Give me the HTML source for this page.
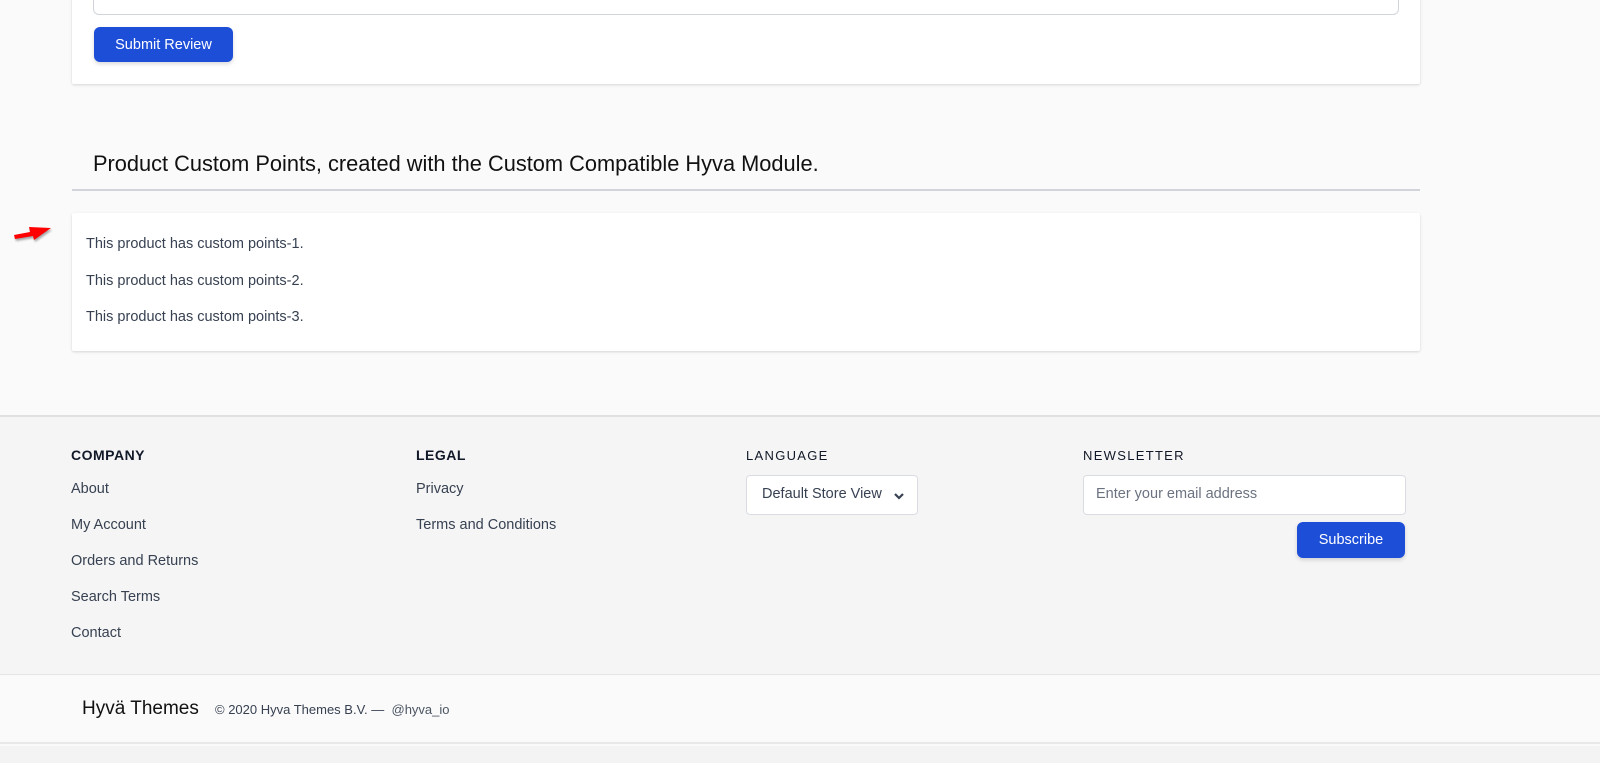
<!DOCTYPE html>
<html><head><meta charset="utf-8"><style>
*{box-sizing:border-box;margin:0;padding:0}
body{width:1600px;height:763px;overflow:hidden;background:#fafafa;font-family:"Liberation Sans",sans-serif;position:relative;color:#111827}
.a{position:absolute}
.card{background:#fff;box-shadow:0 1px 3px rgba(0,0,0,.1),0 1px 2px rgba(0,0,0,.06);border-radius:2px}
.btn{background:#1d4ed8;color:#fff;border-radius:6px;font-size:14.5px;display:flex;align-items:center;justify-content:center;box-shadow:0 2px 4px rgba(0,0,0,.15)}
.pt{font-size:14.5px;color:#374151;left:86px}
.fh{font-size:14px;top:447px;color:#111827}
.fl{font-size:14.5px;color:#374151;left:71px}
</style></head><body>
<div class="a card" style="left:72px;top:-10px;width:1348px;height:94px"></div>
<div class="a" style="left:93px;top:-10px;width:1306px;height:25px;border:1px solid #d1d5db;border-radius:6px;background:#fff"></div>
<div class="a btn" style="left:94px;top:27px;width:139px;height:35px">Submit Review</div>
<div class="a" style="left:93px;top:151px;font-size:21.8px;color:#111">Product Custom Points, created with the Custom Compatible Hyva Module.</div>
<div class="a" style="left:72px;top:189px;width:1348px;height:2px;background:#d1d5db"></div>
<svg class="a" style="left:10px;top:220px;filter:drop-shadow(1px 2px 1px rgba(0,0,0,.35))" width="44" height="24" viewBox="0 0 44 24"><path d="M4 15 L20 12 L19 7 L41 8 L24 20 L23 16 L5 19 Z" fill="#f00"/></svg>
<div class="a card" style="left:72px;top:213px;width:1348px;height:138px"></div>
<div class="a pt" style="top:236px">This product has custom points-1.</div>
<div class="a pt" style="top:273px">This product has custom points-2.</div>
<div class="a pt" style="top:309px">This product has custom points-3.</div>
<div class="a" style="left:0;top:415px;width:1600px;height:259px;background:#f5f5f5;border-top:2px solid #e0e0e0"></div>
<div class="a fh" style="left:71px;font-weight:bold;letter-spacing:.5px">COMPANY</div>
<div class="a fh" style="left:416px;font-weight:bold;letter-spacing:.5px">LEGAL</div>
<div class="a fh" style="left:746px;font-size:13px;top:448px;letter-spacing:1.3px">LANGUAGE</div>
<div class="a fh" style="left:1083px;font-size:13px;top:448px;letter-spacing:1.3px">NEWSLETTER</div>
<div class="a fl" style="top:481px">About</div>
<div class="a fl" style="top:517px">My Account</div>
<div class="a fl" style="top:553px">Orders and Returns</div>
<div class="a fl" style="top:589px">Search Terms</div>
<div class="a fl" style="top:625px">Contact</div>
<div class="a fl" style="left:416px;top:481px">Privacy</div>
<div class="a fl" style="left:416px;top:517px">Terms and Conditions</div>
<div class="a" style="left:746px;top:475px;width:172px;height:40px;background:#fff;border:1px solid #d9dde3;border-radius:4px;font-size:14.5px;color:#374151;padding:10px 0 0 15px">Default Store View
<svg class="a" style="left:147px;top:16px" width="10" height="8" viewBox="0 0 10 8"><path d="M1 2 L5 6 L9 2" stroke="#374151" stroke-width="2.2" fill="none"/></svg></div>
<div class="a" style="left:1083px;top:475px;width:323px;height:40px;background:#fff;border:1px solid #d9dde3;border-radius:4px;font-size:14.5px;color:#6b7280;padding:10px 0 0 12px">Enter your email address</div>
<div class="a btn" style="left:1297px;top:522px;width:108px;height:36px">Subscribe</div>
<div class="a" style="left:0;top:674px;width:1600px;height:70px;background:#fafafa;border-top:1px solid #e5e5e5;border-bottom:2px solid #e8e8e8"></div>
<div class="a" style="left:82px;top:698px;font-size:19px;color:#111">Hyvä Themes</div>
<div class="a" style="left:215px;top:702px;font-size:13px;color:#374151">© 2020 Hyva Themes B.V. — &nbsp;<span style="color:#4b5563">@hyva_io</span></div>
<div class="a" style="left:0;top:746px;width:1600px;height:17px;background:#f3f3f3"></div>
</body></html>
